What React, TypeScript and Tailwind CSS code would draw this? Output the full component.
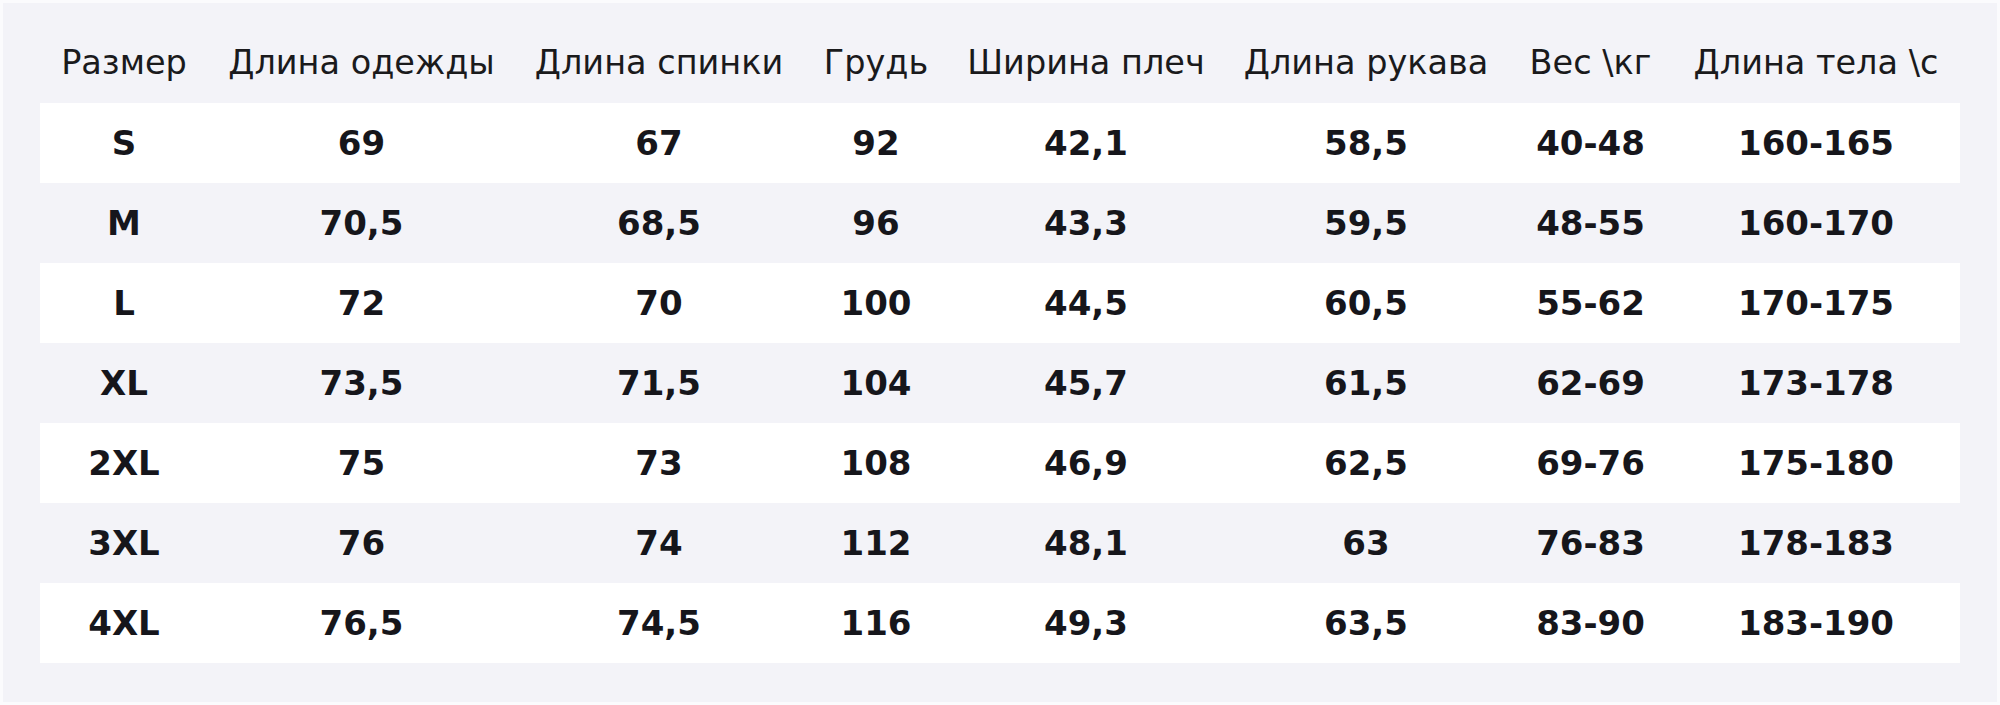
import React from "react";

const headers = [
  "Размер",
  "Длина одежды",
  "Длина спинки",
  "Грудь",
  "Ширина плеч",
  "Длина рукава",
  "Вес \\кг",
  "Длина тела \\с",
];

const rows: string[][] = [
  ["S", "69", "67", "92", "42,1", "58,5", "40-48", "160-165"],
  ["M", "70,5", "68,5", "96", "43,3", "59,5", "48-55", "160-170"],
  ["L", "72", "70", "100", "44,5", "60,5", "55-62", "170-175"],
  ["XL", "73,5", "71,5", "104", "45,7", "61,5", "62-69", "173-178"],
  ["2XL", "75", "73", "108", "46,9", "62,5", "69-76", "175-180"],
  ["3XL", "76", "74", "112", "48,1", "63", "76-83", "178-183"],
  ["4XL", "76,5", "74,5", "116", "49,3", "63,5", "83-90", "183-190"],
];

const grid =
  "grid grid-cols-[168px_307px_288px_146px_274px_286px_163px_288px]";

export default function App() {
  return (
    <div
      className="w-[2000px] h-[705px] bg-[#fbfbfd] p-[3px]"
      style={{ fontFamily: '"DejaVu Sans", Verdana, sans-serif' }}
    >
      <div className="h-full bg-[#f3f3f8] px-[37px] pt-[20px]">
        <div className={`${grid} h-[80px] items-center`}>
          {headers.map((h) => (
            <div
              key={h}
              className="text-center text-[33.5px] leading-none text-[#1a1a1c] whitespace-nowrap"
            >
              {h}
            </div>
          ))}
        </div>
        {rows.map((r, i) => (
          <div
            key={r[0]}
            className={`${grid} h-[80px] items-center ${
              i % 2 === 0 ? "bg-white" : "bg-[#f3f3f8]"
            }`}
          >
            {r.map((c, j) => (
              <div
                key={j}
                className="text-center text-[34px] font-bold leading-none text-[#16161b] whitespace-nowrap"
              >
                {c}
              </div>
            ))}
          </div>
        ))}
      </div>
    </div>
  );
}
